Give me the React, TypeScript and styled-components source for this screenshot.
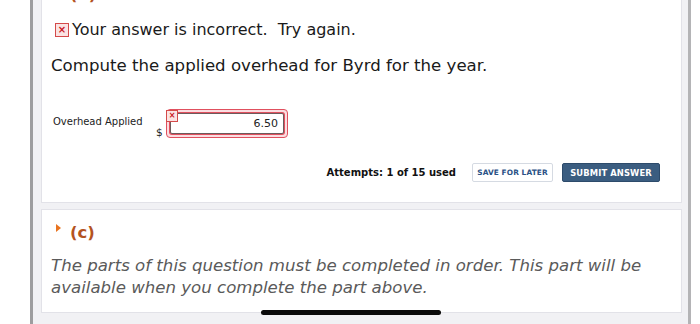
import React from "react";
import styled, { createGlobalStyle } from "styled-components";

const Global = createGlobalStyle`
  html, body { margin: 0; padding: 0; background: #ffffff; overflow: hidden; }
  body { font-family: "DejaVu Sans", Verdana, sans-serif; }
`;

const Screen = styled.div`
  position: relative;
  width: 700px;
  height: 324px;
  overflow: hidden;
  background: #ffffff;
`;

const Frame = styled.div`
  margin-left: 30px;
  width: 641px;
  height: 324px;
  border-left: 3px solid #9d9d9f;
  border-right: 3px solid #b4b4b6;
  background: #f1f1f4;
  padding: 0 6px 0 8px;
  box-sizing: content-box;
  display: flex;
  flex-direction: column;
  gap: 6px;
`;

const Card = styled.section<{ $top?: boolean }>`
  background: #ffffff;
  border: 1px solid #e2e2e8;
  border-top: ${(p) => (p.$top ? "none" : "1px solid #e2e2e8")};
  margin-top: ${(p) => (p.$top ? "-15px" : "0")};
  padding: 0 9px;
  box-sizing: border-box;
`;

const PartLabel = styled.div`
  display: flex;
  align-items: flex-start;
  gap: 9px;
  padding-left: 5px;
  color: #b4531f;
  font-weight: bold;
  font-size: 16px;
  height: 20px;
`;

const Arrow = styled.span`
  width: 0;
  height: 0;
  margin-top: 1px;
  border-top: 4px solid transparent;
  border-bottom: 4px solid transparent;
  border-left: 5px solid #e8731f;
`;

const Feedback = styled.div`
  display: flex;
  align-items: center;
  gap: 3px;
  margin-top: 15px;
  padding-left: 4px;
  font-size: 16px;
  color: #1a1a1a;
  white-space: pre;
`;

const XBox = styled.span<{ $size: number }>`
  display: inline-flex;
  align-items: center;
  justify-content: center;
  width: ${(p) => p.$size}px;
  height: ${(p) => p.$size}px;
  box-sizing: border-box;
  border: 1px solid #d44a4a;
  background: #fbe3e3;
  color: #c8161d;
  font-size: ${(p) => Math.round(p.$size * 0.7)}px;
  font-weight: bold;
  line-height: 1;
`;

const Question = styled.p`
  margin: 17px 0 0 0;
  font-size: 16.6px;
  color: #1a1a1a;
`;

const AnswerRow = styled.div`
  display: flex;
  align-items: flex-start;
  margin-top: 31px;
  padding-left: 2px;
`;

const FieldLabel = styled.span`
  font-size: 10px;
  color: #222;
  margin-top: 10px;
  width: 103px;
`;

const Dollar = styled.span`
  font-size: 10.5px;
  color: #222;
  margin-top: 20px;
  width: 10px;
`;

const InputWrap = styled.div`
  position: relative;
  padding-top: 3px;
`;

const ErrorOuter = styled.div`
  border: 1px solid #e0505e;
  border-radius: 4px;
  padding: 3px;
  background: #fbdde1;
  width: 114px;
  box-sizing: content-box;
`;

const Input = styled.div`
  border: 1px solid #6d5a5c;
  box-shadow: 0 0 0 1px #e0505e;
  border-radius: 2px;
  background: #fff;
  height: 21px;
  box-sizing: border-box;
  text-align: right;
  padding-right: 5px;
  font-size: 11px;
  line-height: 19px;
  color: #222;
`;

const CornerX = styled.div`
  position: absolute;
  left: 0;
  top: -3px;
`;

const Actions = styled.div`
  display: flex;
  justify-content: flex-end;
  align-items: center;
  gap: 9px;
  margin-top: 25px;
  padding-right: 12px;
  height: 19px;
  padding-bottom: 20px;
`;

const Attempts = styled.span`
  font-size: 10px;
  font-weight: bold;
  color: #111;
  margin-right: 7px;
`;

const Button = styled.button<{ $primary?: boolean }>`
  font-family: "DejaVu Sans", Verdana, sans-serif;
  font-size: ${(p) => (p.$primary ? "8.4px" : "7.4px")};
  font-weight: bold;
  letter-spacing: 0.1px;
  white-space: nowrap;
  height: 19px;
  padding: 0;
  border-radius: 2px;
  cursor: pointer;
  border: 1px solid ${(p) => (p.$primary ? "#2d4b6b" : "#d5dae2")};
  background: ${(p) => (p.$primary ? "#3b5d80" : "#ffffff")};
  color: ${(p) => (p.$primary ? "#ffffff" : "#2b5286")};
  width: ${(p) => (p.$primary ? "98px" : "81px")};
`;

const Notice = styled.p`
  margin: 12px 0 0 0;
  font-size: 16.6px;
  font-style: italic;
  color: #5a5a5a;
  line-height: 22px;
  padding-bottom: 13px;
`;

const SecondHeader = styled(PartLabel)`
  margin-top: 13px;
  font-size: 16.5px;
`;

const Spacer = styled.span`
  width: 5px;
`;

const HomeBar = styled.div`
  position: absolute;
  left: 261px;
  top: 310px;
  width: 180px;
  height: 5px;
  border-radius: 3px;
  background: #0a0a0a;
`;

export default function App() {
  return (
    <Screen>
      <Global />
      <Frame>
        <Card $top>
          <PartLabel>
            <Spacer />
            <span>(b)</span>
          </PartLabel>
          <Feedback>
            <XBox $size={14}>×</XBox>
            {"Your answer is incorrect.  Try again."}
          </Feedback>
          <Question>Compute the applied overhead for Byrd for the year.</Question>
          <AnswerRow>
            <FieldLabel>Overhead Applied</FieldLabel>
            <Dollar>$</Dollar>
            <InputWrap>
              <CornerX>
                <XBox $size={12}>×</XBox>
              </CornerX>
              <ErrorOuter>
                <Input>6.50</Input>
              </ErrorOuter>
            </InputWrap>
          </AnswerRow>
          <Actions>
            <Attempts>Attempts: 1 of 15 used</Attempts>
            <Button>SAVE FOR LATER</Button>
            <Button $primary>SUBMIT ANSWER</Button>
          </Actions>
        </Card>
        <Card>
          <SecondHeader>
            <Arrow />
            <span>(c)</span>
          </SecondHeader>
          <Notice>
            The parts of this question must be completed in order. This part will be available when you
            complete the part above.
          </Notice>
        </Card>
      </Frame>
      <HomeBar />
    </Screen>
  );
}
